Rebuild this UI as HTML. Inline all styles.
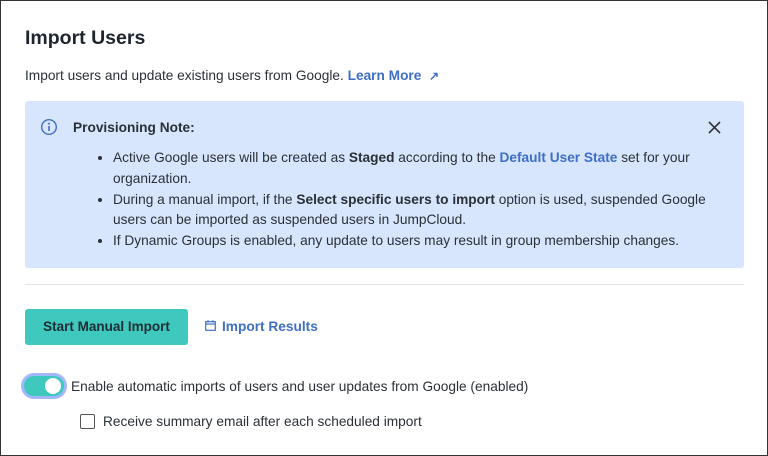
<!DOCTYPE html>
<html><head><style>
html,body{margin:0;padding:0}
body{width:768px;height:456px;overflow:hidden;font-family:"Liberation Sans",sans-serif;color:#2b3037;background:#fff;position:relative}
.frame{position:absolute;left:0;top:0;width:766px;height:454px;border:1px solid #333;box-sizing:content-box}
.abs{position:absolute;white-space:nowrap}
h1{position:absolute;left:25px;top:27px;margin:0;font-size:19.5px;font-weight:bold;color:#1f2630}
.link{color:#3e6fc6;font-weight:bold}
.note{position:absolute;left:25px;top:101px;width:719px;height:167px;background:#d7e5fd;border-radius:3px}
.note ul{position:absolute;left:73px;top:47px;margin:0;padding:0 0 0 15px;width:610px;font-size:13.7px;line-height:20.8px;white-space:normal}
.note li{margin:0}
.btn{position:absolute;left:25px;top:309px;width:163px;height:36px;background:#3ec8be;border-radius:3px;font-size:13.5px;font-weight:bold;color:#1c2d33;text-align:center;line-height:36px}
</style></head><body>
<div class="frame"></div>
<h1>Import Users</h1>
<div class="abs" style="left:25px;top:68px;font-size:13.7px">Import users and update existing users from Google. <span class="link">Learn More</span> &nbsp;<span class="link" style="font-size:12px">&#8599;</span></div>
<div class="note">
<svg class="abs" style="left:15px;top:17px" width="18" height="18" viewBox="0 0 18 18"><circle cx="9" cy="9" r="7.3" fill="none" stroke="#3e6fc6" stroke-width="1.4"/><line x1="9" y1="8" x2="9" y2="13" stroke="#3e6fc6" stroke-width="1.6"/><circle cx="9" cy="5.6" r="1" fill="#3e6fc6"/></svg>
<div class="abs" style="left:48px;top:19px;font-size:13.7px;font-weight:bold">Provisioning Note:</div>
<svg class="abs" style="left:683px;top:20px" width="13" height="13" viewBox="0 0 13 13"><path d="M1 1L12 12M12 1L1 12" stroke="#333" stroke-width="1.6"/></svg>
<ul>
<li>Active Google users will be created as <b>Staged</b> according to the <span class="link">Default User State</span> set for your organization.</li>
<li>During a manual import, if the <b>Select specific users to import</b> option is used, suspended Google users can be imported as suspended users in JumpCloud.</li>
<li>If Dynamic Groups is enabled, any update to users may result in group membership changes.</li>
</ul>
</div>
<div class="abs" style="left:25px;top:284px;width:719px;height:1px;background:#e3e5e8"></div>
<div class="btn">Start Manual Import</div>
<svg class="abs" style="left:205px;top:320px" width="11" height="11" viewBox="0 0 11 11"><rect x="0.7" y="1.7" width="9.6" height="8.6" fill="none" stroke="#3e6fc6" stroke-width="1.2"/><line x1="0.7" y1="4" x2="10.3" y2="4" stroke="#3e6fc6" stroke-width="1.2"/><line x1="3" y1="0" x2="3" y2="2.5" stroke="#3e6fc6"/><line x1="8" y1="0" x2="8" y2="2.5" stroke="#3e6fc6"/></svg>
<div class="abs link" style="left:222px;top:319px;font-size:13.7px">Import Results</div>
<div class="abs" style="left:21px;top:373px;width:46px;height:26px;border-radius:13px;background:#a4b7fb"></div>
<div class="abs" style="left:24px;top:376px;width:40px;height:20px;border-radius:10px;background:#3ec8be"></div>
<div class="abs" style="left:45px;top:378px;width:16px;height:16px;border-radius:8px;background:#fff"></div>
<div class="abs" style="left:71px;top:379px;font-size:13.7px">Enable automatic imports of users and user updates from Google (enabled)</div>
<div class="abs" style="left:80px;top:414px;width:13px;height:13px;border:1.5px solid #555;border-radius:2px"></div>
<div class="abs" style="left:103px;top:414px;font-size:13.7px">Receive summary email after each scheduled import</div>
</body></html>
